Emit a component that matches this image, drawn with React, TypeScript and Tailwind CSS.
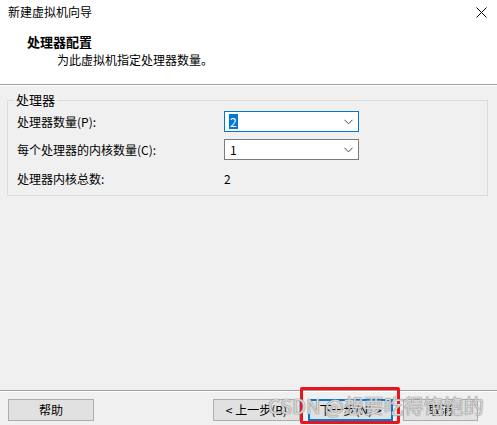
import React from 'react';

const font = { fontFamily: '"Noto Sans CJK SC", "Microsoft YaHei", sans-serif' };

function Chevron() {
  return (
    <svg width="9" height="6" viewBox="0 0 9 6" className="shrink-0">
      <path d="M0.5 0.8 L4.5 4.8 L8.5 0.8" fill="none" stroke="#444" strokeWidth="1" />
    </svg>
  );
}

interface ComboProps {
  value: string;
  focused?: boolean;
}

function Combo({ value, focused }: ComboProps) {
  return (
    <div
      className={`w-[135px] h-[21px] bg-white border flex items-center justify-between pl-[4px] pr-[5px] ${
        focused ? 'border-[#0078d7]' : 'border-[#7a7a7a]'
      }`}
    >
      {focused ? (
        <span className="bg-[#0078d7] text-white leading-[15px] px-[1px]">{value}</span>
      ) : (
        <span className="leading-[15px] px-[1px]">{value}</span>
      )}
      <Chevron />
    </div>
  );
}

interface BtnProps {
  label: string;
  width: string;
  primary?: boolean;
  className?: string;
}

function Btn({ label, width, primary, className = '' }: BtnProps) {
  return (
    <div
      className={`${width} h-[22px] bg-[#e1e1e1] flex items-center justify-center text-[12px] text-black ${
        primary ? 'border-2 border-[#0078d7]' : 'border border-[#adadad]'
      } ${className}`}
    >
      {label}
    </div>
  );
}

export default function App() {
  return (
    <div
      className="relative w-[497px] h-[425px] bg-[#f0f0f0] flex flex-col overflow-hidden text-[12px] text-black"
      style={font}
    >
      {/* Header */}
      <div className="h-[85px] bg-white border-b border-[#a0a0a0] shrink-0">
        <div className="h-[24px] flex items-center justify-between pl-[8px] pr-[10px]">
          <span className="leading-[16px]">新建虚拟机向导</span>
          <svg width="11" height="11" viewBox="0 0 11 11">
            <path d="M0.5 0.5 L10.5 10.5 M10.5 0.5 L0.5 10.5" stroke="#000" strokeWidth="1" />
          </svg>
        </div>
        <div className="mt-[9px] pl-[27px] text-[13px] font-bold leading-[18px]">处理器配置</div>
        <div className="pl-[57px] leading-[18px]">为此虚拟机指定处理器数量。</div>
      </div>
      <div className="h-px bg-white shrink-0" />

      {/* Body */}
      <div className="flex-1 px-[7px] pt-[14px]">
        <div className="w-[481px] border border-[#dcdcdc] pl-[9px] pb-[6px]">
          <div className="-mt-[9px] ml-[-3px] px-[2px] w-fit bg-[#f0f0f0] leading-[16px] text-[13px]">处理器</div>
          <div className="mt-[3px] grid grid-cols-[207px_1fr] gap-y-[7px] items-center">
            <span className="leading-[21px]">处理器数量(P):</span>
            <Combo value="2" focused />
            <span className="leading-[21px]">每个处理器的内核数量(C):</span>
            <Combo value="1" />
            <span className="leading-[21px] mt-px">处理器内核总数:</span>
            <span className="leading-[21px] mt-px">2</span>
          </div>
        </div>
      </div>

      {/* Footer */}
      <div className="shrink-0 border-t border-[#a0a0a0]">
        <div className="h-px bg-white" />
        <div className="flex items-center pl-[8px] pr-[19px] pt-[7px] pb-[4px]">
          <Btn label="帮助" width="w-[86px]" />
          <div className="flex-1" />
          <Btn label="< 上一步(B)" width="w-[87px]" />
          <Btn label="下一步(N) >" width="w-[85px]" primary className="ml-[8px]" />
          <Btn label="取消" width="w-[75px]" className="ml-[10px]" />
        </div>
      </div>

      {/* Annotation box */}
      <div className="absolute left-[300px] top-[387px] w-[100px] h-[37px] border-[3px] border-[#e8161c] rounded-[2px]" />

      {/* Watermark */}
      <div className="absolute left-[268px] top-[394px] text-[20px] leading-[24px] text-white/70 whitespace-nowrap [text-shadow:0_0_1px_#777,0_0_1px_#777]">
        CSDN @想要吃得饱饱的
      </div>
    </div>
  );
}
